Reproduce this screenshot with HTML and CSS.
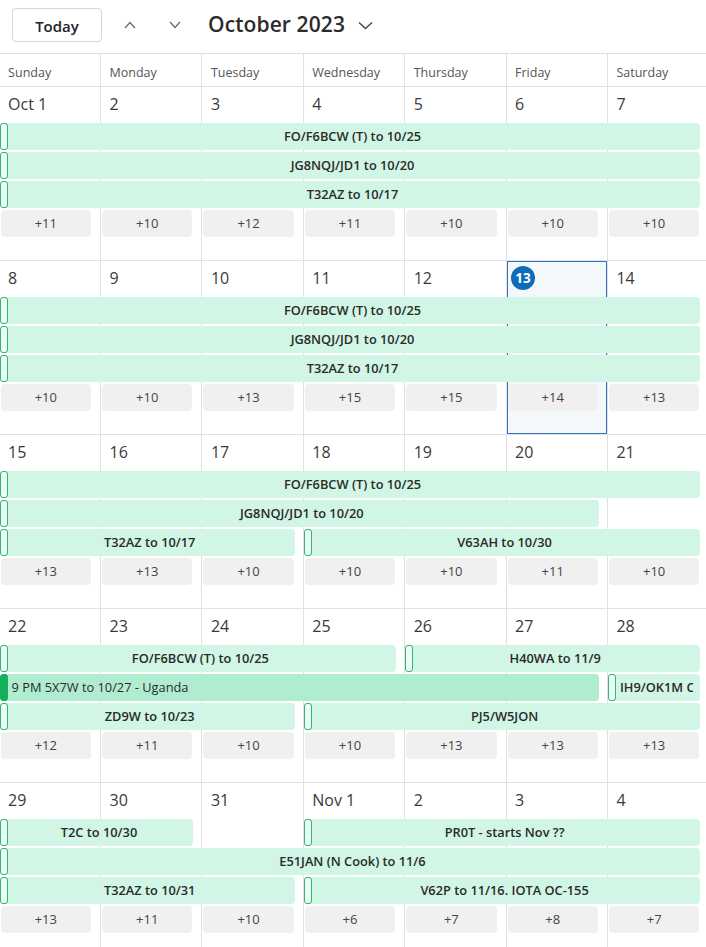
FILE: index.html
```html
<!DOCTYPE html>
<html>
<head>
<meta charset="utf-8">
<link rel="stylesheet" href="styles.css">
</head>
<body>
<div class="toolbar">
  <button class="today-btn">Today</button>
  <span class="icon-btn first"><svg width="12" height="8" viewBox="0 0 12 8"><polyline points="1,7 6,1.5 11,7" fill="none" stroke="#6b6b6b" stroke-width="1.3"/></svg></span>
  <span class="icon-btn"><svg width="12" height="8" viewBox="0 0 12 8"><polyline points="1,1 6,6.5 11,1" fill="none" stroke="#6b6b6b" stroke-width="1.3"/></svg></span>
  <span class="title">October 2023</span>
  <span class="title-chev"><svg width="15" height="9" viewBox="0 0 15 9"><polyline points="1,1.5 7.5,7.5 14,1.5" fill="none" stroke="#444" stroke-width="1.4"/></svg></span>
</div>

<div class="cal">
  <div class="dayhead">
    <div class="dn">Sunday</div><div class="dn">Monday</div><div class="dn">Tuesday</div><div class="dn">Wednesday</div><div class="dn">Thursday</div><div class="dn">Friday</div><div class="dn">Saturday</div>
  </div>

  <!-- Week 1 -->
  <div class="week">
    <div class="cell c1"><span class="date">Oct 1</span></div>
    <div class="cell c2"><span class="date">2</span></div>
    <div class="cell c3"><span class="date">3</span></div>
    <div class="cell c4"><span class="date">4</span></div>
    <div class="cell c5"><span class="date">5</span></div>
    <div class="cell c6"><span class="date">6</span></div>
    <div class="cell c7"><span class="date">7</span></div>
    <div class="ev r1 c1 e8"><span class="txt">FO/F6BCW (T) to 10/25</span></div>
    <div class="ev r2 c1 e8"><span class="txt">JG8NQJ/JD1 to 10/20</span></div>
    <div class="ev r3 c1 e8"><span class="txt">T32AZ to 10/17</span></div>
    <div class="more c1">+11</div><div class="more c2">+10</div><div class="more c3">+12</div><div class="more c4">+11</div><div class="more c5">+10</div><div class="more c6">+10</div><div class="more c7">+10</div>
  </div>

  <!-- Week 2 -->
  <div class="week">
    <div class="cell c1"><span class="date">8</span></div>
    <div class="cell c2"><span class="date">9</span></div>
    <div class="cell c3"><span class="date">10</span></div>
    <div class="cell c4"><span class="date">11</span></div>
    <div class="cell c5"><span class="date">12</span></div>
    <div class="cell c6 today"><span class="date"><span class="todaynum">13</span></span></div>
    <div class="cell c7"><span class="date">14</span></div>
    <div class="ev r1 c1 e8"><span class="txt">FO/F6BCW (T) to 10/25</span></div>
    <div class="ev r2 c1 e8"><span class="txt">JG8NQJ/JD1 to 10/20</span></div>
    <div class="ev r3 c1 e8"><span class="txt">T32AZ to 10/17</span></div>
    <div class="more c1">+10</div><div class="more c2">+10</div><div class="more c3">+13</div><div class="more c4">+15</div><div class="more c5">+15</div><div class="more c6">+14</div><div class="more c7">+13</div>
  </div>

  <!-- Week 3 -->
  <div class="week">
    <div class="cell c1"><span class="date">15</span></div>
    <div class="cell c2"><span class="date">16</span></div>
    <div class="cell c3"><span class="date">17</span></div>
    <div class="cell c4"><span class="date">18</span></div>
    <div class="cell c5"><span class="date">19</span></div>
    <div class="cell c6"><span class="date">20</span></div>
    <div class="cell c7"><span class="date">21</span></div>
    <div class="ev r1 c1 e8"><span class="txt">FO/F6BCW (T) to 10/25</span></div>
    <div class="ev r2 c1 e7"><span class="txt">JG8NQJ/JD1 to 10/20</span></div>
    <div class="ev r3 c1 e4"><span class="txt">T32AZ to 10/17</span></div>
    <div class="ev r3 c4 e8"><span class="txt">V63AH to 10/30</span></div>
    <div class="more c1">+13</div><div class="more c2">+13</div><div class="more c3">+10</div><div class="more c4">+10</div><div class="more c5">+10</div><div class="more c6">+11</div><div class="more c7">+10</div>
  </div>

  <!-- Week 4 -->
  <div class="week">
    <div class="cell c1"><span class="date">22</span></div>
    <div class="cell c2"><span class="date">23</span></div>
    <div class="cell c3"><span class="date">24</span></div>
    <div class="cell c4"><span class="date">25</span></div>
    <div class="cell c5"><span class="date">26</span></div>
    <div class="cell c6"><span class="date">27</span></div>
    <div class="cell c7"><span class="date">28</span></div>
    <div class="ev r1 c1 e5"><span class="txt">FO/F6BCW (T) to 10/25</span></div>
    <div class="ev r1 c5 e8"><span class="txt">H40WA to 11/9</span></div>
    <div class="ev r2 c1 e7 busy"><span class="txt">9 PM 5X7W to 10/27 - Uganda</span></div>
    <div class="ev r2 c7 e8"><span class="txt">IH9/OK1M C</span></div>
    <div class="ev r3 c1 e4"><span class="txt">ZD9W to 10/23</span></div>
    <div class="ev r3 c4 e8"><span class="txt">PJ5/W5JON</span></div>
    <div class="more c1">+12</div><div class="more c2">+11</div><div class="more c3">+10</div><div class="more c4">+10</div><div class="more c5">+13</div><div class="more c6">+13</div><div class="more c7">+13</div>
  </div>

  <!-- Week 5 -->
  <div class="week">
    <div class="cell c1"><span class="date">29</span></div>
    <div class="cell c2"><span class="date">30</span></div>
    <div class="cell c3"><span class="date">31</span></div>
    <div class="cell c4"><span class="date">Nov 1</span></div>
    <div class="cell c5"><span class="date">2</span></div>
    <div class="cell c6"><span class="date">3</span></div>
    <div class="cell c7"><span class="date">4</span></div>
    <div class="ev r1 c1 e3"><span class="txt">T2C to 10/30</span></div>
    <div class="ev r1 c4 e8"><span class="txt">PR0T - starts Nov ??</span></div>
    <div class="ev r2 c1 e8"><span class="txt">E51JAN (N Cook) to 11/6</span></div>
    <div class="ev r3 c1 e4"><span class="txt">T32AZ to 10/31</span></div>
    <div class="ev r3 c4 e8"><span class="txt">V62P to 11/16. IOTA OC-155</span></div>
    <div class="more c1">+13</div><div class="more c2">+11</div><div class="more c3">+10</div><div class="more c4">+6</div><div class="more c5">+7</div><div class="more c6">+8</div><div class="more c7">+7</div>
  </div>
</div>
</body>
</html>
```

FILE: styles.css
```css
* { box-sizing: border-box; }
html, body { margin: 0; padding: 0; }
body {
  width: 706px;
  height: 947px;
  overflow: hidden;
  background: #fff;
  font-family: "Open Sans", "Noto Sans", sans-serif;
  color: #242424;
}

/* toolbar */
.toolbar {
  display: flex;
  align-items: center;
  height: 53px;
  padding: 0 0 3px 12px;
}
.today-btn {
  width: 90px;
  height: 34px;
  border: 1px solid #d6d6d6;
  border-radius: 4px;
  background: #fff;
  font-family: inherit;
  font-size: 15px;
  font-weight: 600;
  color: #242424;
  padding: 2px 0 0;
}
.icon-btn {
  width: 32px;
  height: 32px;
  display: flex;
  align-items: center;
  justify-content: center;
  margin-left: 13.5px;
}
.icon-btn.first { margin-left: 11.5px; }
.title {
  margin-left: 17px;
  font-size: 21px;
  font-weight: 600;
  color: #2b2b2b;
  letter-spacing: 0.1px;
  padding-bottom: 3px;
}
.title-chev {
  display: flex;
  margin-left: 13px;
}

/* calendar */
.cal {
  width: 710px;
  margin-left: -1.4px;
}
.dayhead {
  display: grid;
  grid-template-columns: repeat(7, 101.4px);
  height: 33px;
  border-top: 1px solid #e1e1e1;
}
.dn {
  border-left: 1px solid #e1e1e1;
  padding: 3px 0 0 8.5px;
  font-size: 12.5px;
  line-height: 32px;
  color: #555;
}
.week {
  display: grid;
  grid-template-columns: repeat(7, 101.4px);
  grid-template-rows: 34px 27px 27px 27px 27px 1fr;
  row-gap: 2px;
  height: 174px;
  border-top: 1px solid #e1e1e1;
}
.cell {
  grid-row: 1 / -1;
  border-left: 1px solid #e1e1e1;
  padding-left: 8.5px;
}
.date {
  display: flex;
  align-items: center;
  height: 34px;
  font-size: 16px;
  color: #3a3a3a;
}
.today {
  background: #f3f8fd;
  box-shadow: inset 0 0 0 1px #3474bd;
}
.todaynum {
  display: flex;
  align-items: center;
  justify-content: center;
  width: 24px;
  height: 24px;
  margin-left: -4px;
  border-radius: 50%;
  background: #0f6cbd;
  color: #fff;
  font-size: 13.5px;
  font-weight: 700;
}

.c1 { grid-column-start: 1; }
.c2 { grid-column-start: 2; }
.c3 { grid-column-start: 3; }
.c4 { grid-column-start: 4; }
.c5 { grid-column-start: 5; }
.c6 { grid-column-start: 6; }
.c7 { grid-column-start: 7; }
.e3 { grid-column-end: 3; }
.e4 { grid-column-end: 4; }
.e5 { grid-column-end: 5; }
.e7 { grid-column-end: 7; }
.e8 { grid-column-end: 8; }
.r1 { grid-row: 2; }
.r2 { grid-row: 3; }
.r3 { grid-row: 4; }

.ev {
  position: relative;
  margin: 0 8px 0 1px;
  padding: 0 7px 0 12px;
  background: #d1f6e5;
  border-radius: 4px;
  font-size: 12.8px;
  font-weight: 600;
  line-height: 27px;
  color: #2a2a2a;
  text-align: center;
  white-space: nowrap;
}
.ev::before {
  content: "";
  position: absolute;
  left: 0;
  top: 0;
  bottom: 0;
  width: 6px;
  border: 1px solid #34b474;
  border-radius: 3px;
  background: #ecfbf4;
}
.txt {
  display: block;
  overflow: hidden;
}
.ev.busy {
  background: #b0edd0;
  text-align: left;
  font-weight: 500;
}
.ev.busy::before {
  background: #14b05c;
  border-color: #14b05c;
}

.more {
  grid-row: 5;
  margin: 0 9px 0 2px;
  background: #f0f0f0;
  border-radius: 4px;
  font-size: 13px;
  line-height: 27px;
  text-align: center;
  color: #444;
}
```
